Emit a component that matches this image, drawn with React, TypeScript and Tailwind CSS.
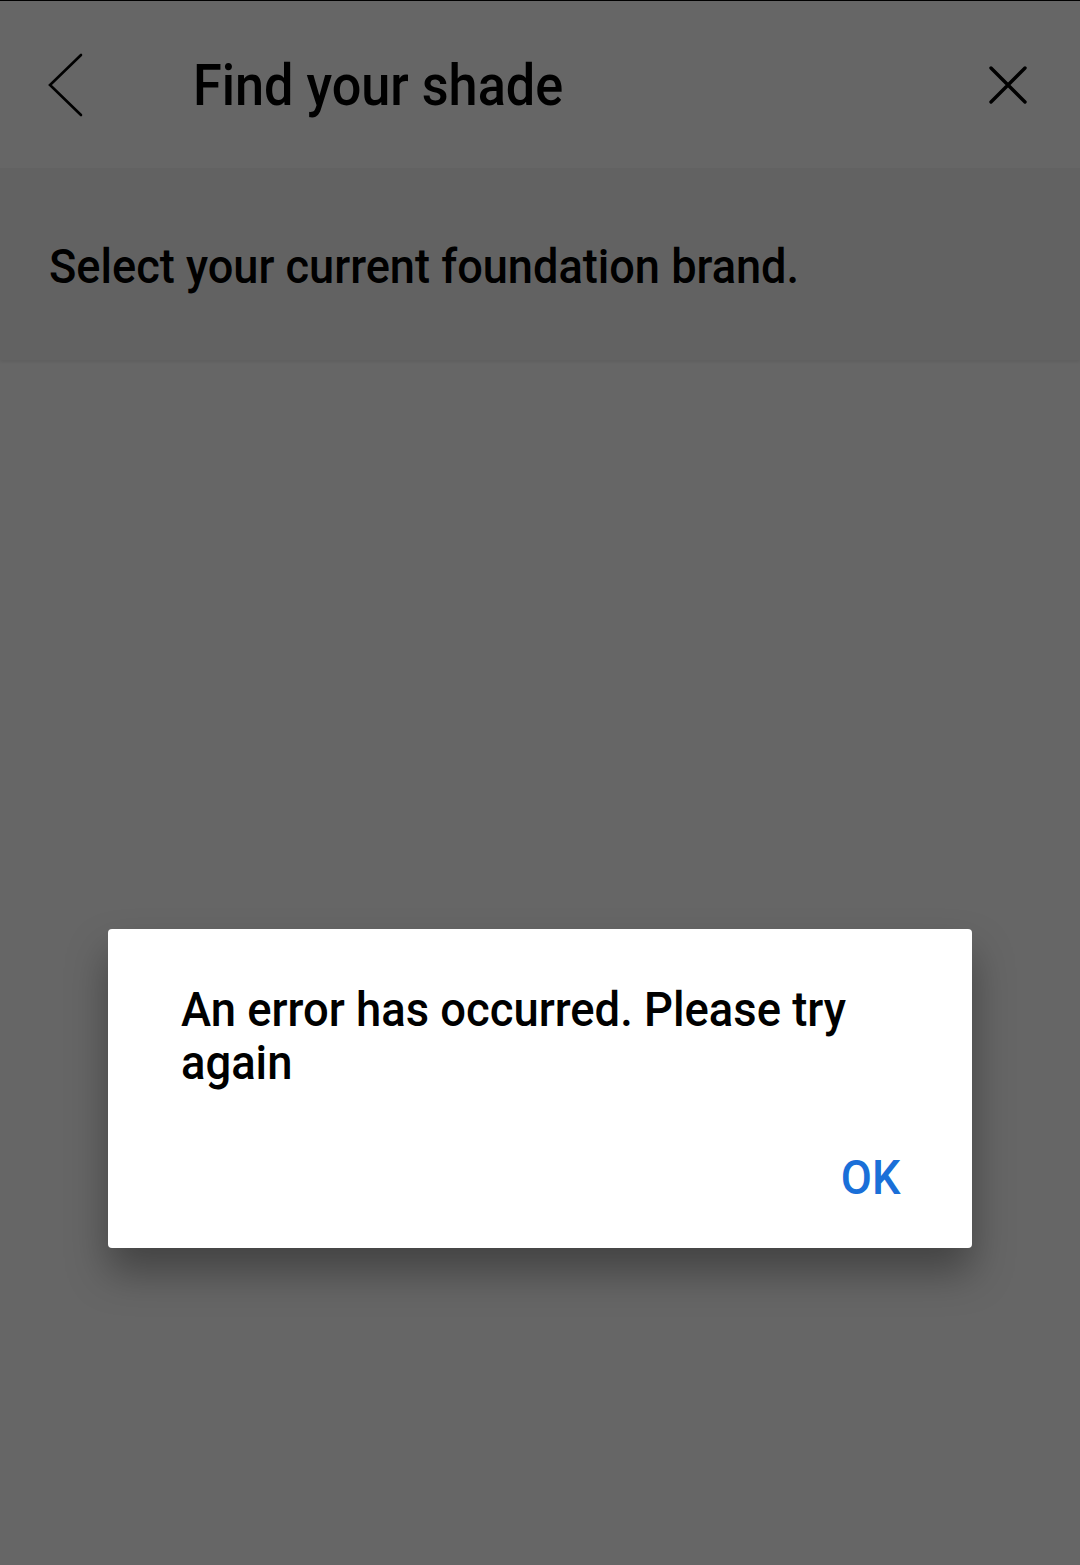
export default function App() {
  return (
    <div className="relative min-h-[1565px] w-[1080px] overflow-hidden bg-white font-['Roboto',sans-serif] text-black">
      <div className="h-px bg-black" />

      {/* top bar */}
      <header className="flex h-[167px] items-center pl-[46px] pr-[52px]">
        <svg width="40" height="66" viewBox="0 0 40 66" fill="none" stroke="#000" strokeWidth="2.6" strokeLinecap="round">
          <path d="M35 3 L4 33 L35 63" />
        </svg>
        <h1 className="ml-[107px] flex-1 origin-left scale-x-[0.9] text-[58px] font-medium leading-none">Find your shade</h1>
        <svg width="40" height="40" viewBox="0 0 40 40" fill="none" stroke="#000" strokeWidth="3.4" strokeLinecap="round">
          <path d="M3 3 L37 37 M37 3 L3 37" />
        </svg>
      </header>

      {/* prompt banner */}
      <div className="flex h-[192px] items-center bg-[#f5f5f5] px-[49px] pt-[6px] shadow-[0_2px_3px_rgba(0,0,0,0.08)]">
        <p className="origin-left scale-x-[0.94] text-[48px] font-medium leading-none">Select your current foundation brand.</p>
      </div>

      {/* scrim + error dialog */}
      <div className="absolute inset-0 flex flex-col items-center bg-black/60 pt-[929px]">
        <div className="w-[864px] rounded-[4px] bg-white pb-[46px] pl-[73px] pr-[72px] pt-[54px] shadow-[0_24px_40px_rgba(0,0,0,0.35)]">
          <p className="origin-left scale-x-[0.945] text-[48px] font-medium leading-[53px]">An error has occurred. Please try again</p>
          <div className="mt-[65px] flex justify-end">
            <button className="origin-right scale-x-[0.94] text-[48px] font-medium leading-none text-[#1a6fd8]">OK</button>
          </div>
        </div>
      </div>
    </div>
  );
}
